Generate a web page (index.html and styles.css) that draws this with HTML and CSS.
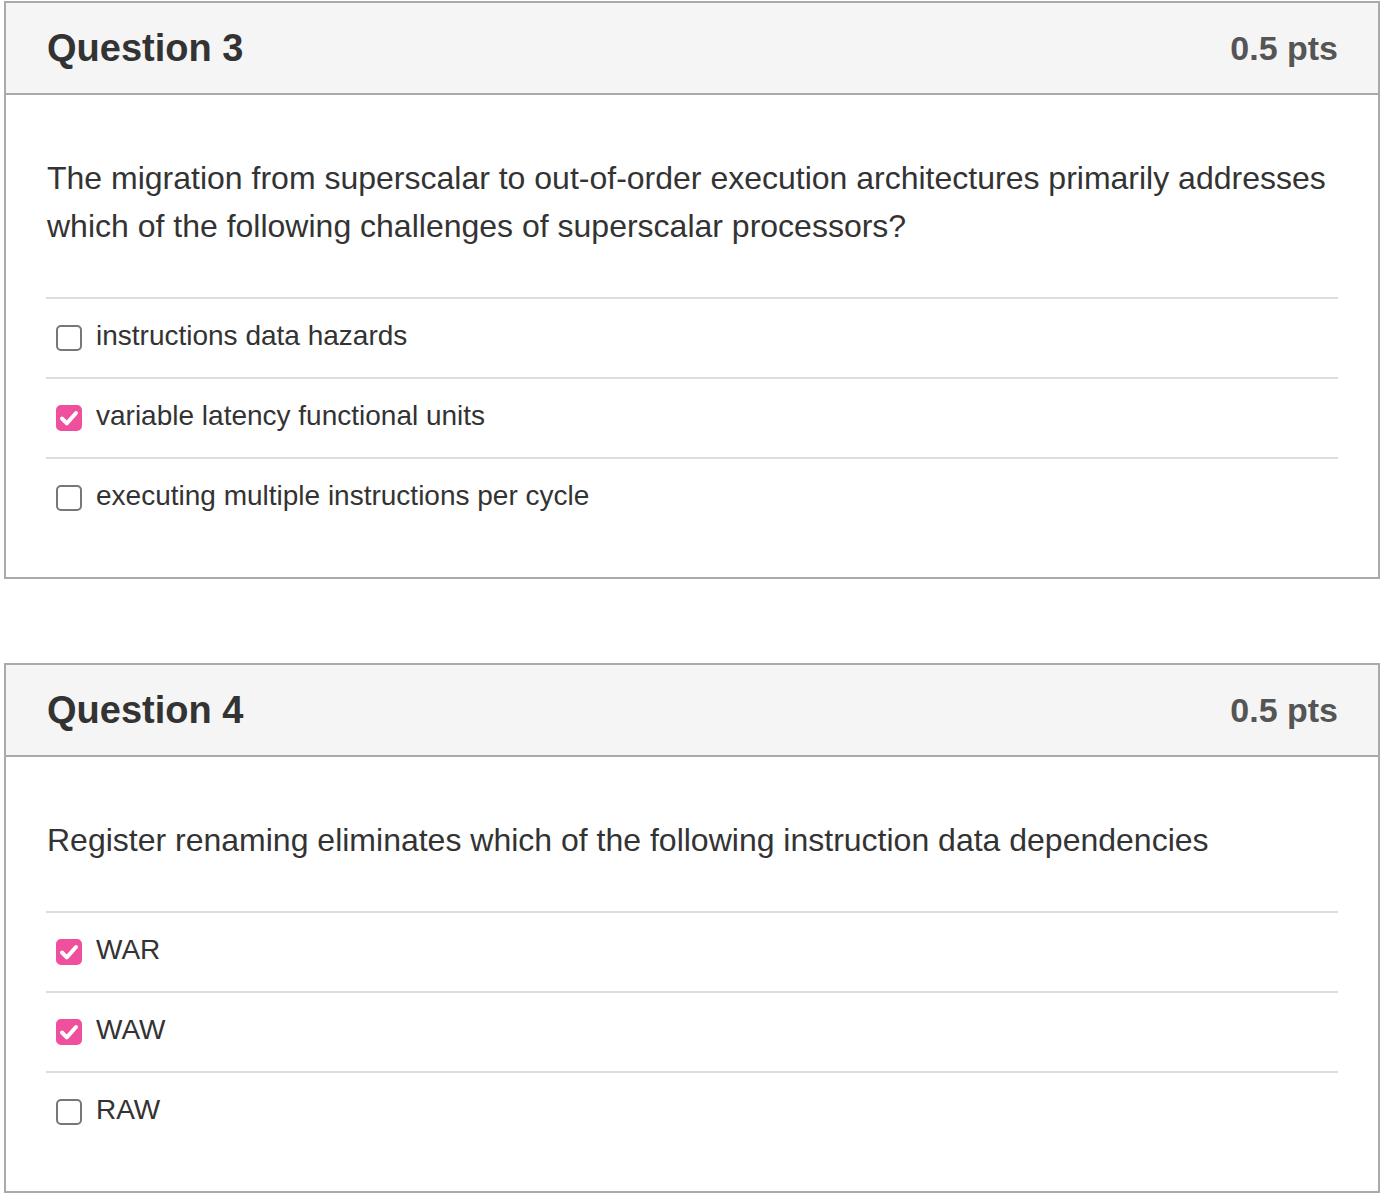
FILE: index.html
```html
<!DOCTYPE html>
<html>
<head>
<meta charset="utf-8">
<link rel="stylesheet" href="styles.css">
</head>
<body>
<div class="page">
  <section class="card">
    <header class="card-head">
      <h2 class="q-title">Question 3</h2>
      <span class="q-pts">0.5 pts</span>
    </header>
    <div class="card-body">
      <p class="q-text">The migration from superscalar to out-of-order execution architectures primarily addresses which of the following challenges of superscalar processors?</p>
      <ul class="answers">
        <li class="answer"><span class="box"></span><span class="label">instructions data hazards</span></li>
        <li class="answer"><span class="box checked"><svg viewBox="0 0 26 26" width="26" height="26"><path d="M6 13.5 L10.8 18.3 L20 8" fill="none" stroke="#fff" stroke-width="4" stroke-linecap="round" stroke-linejoin="round"/></svg></span><span class="label">variable latency functional units</span></li>
        <li class="answer"><span class="box"></span><span class="label">executing multiple instructions per cycle</span></li>
      </ul>
    </div>
  </section>
  <section class="card">
    <header class="card-head">
      <h2 class="q-title">Question 4</h2>
      <span class="q-pts">0.5 pts</span>
    </header>
    <div class="card-body">
      <p class="q-text">Register renaming eliminates which of the following instruction data dependencies</p>
      <ul class="answers">
        <li class="answer"><span class="box checked"><svg viewBox="0 0 26 26" width="26" height="26"><path d="M6 13.5 L10.8 18.3 L20 8" fill="none" stroke="#fff" stroke-width="4" stroke-linecap="round" stroke-linejoin="round"/></svg></span><span class="label">WAR</span></li>
        <li class="answer"><span class="box checked"><svg viewBox="0 0 26 26" width="26" height="26"><path d="M6 13.5 L10.8 18.3 L20 8" fill="none" stroke="#fff" stroke-width="4" stroke-linecap="round" stroke-linejoin="round"/></svg></span><span class="label">WAW</span></li>
        <li class="answer"><span class="box"></span><span class="label">RAW</span></li>
      </ul>
    </div>
  </section>
</div>
</body>
</html>
```
FILE: styles.css
```css
html, body {
  margin: 0;
  padding: 0;
  background: #fff;
}
body {
  font-family: "Liberation Sans", Arial, Helvetica, sans-serif;
  color: #333;
}
.page {
  display: flex;
  flex-direction: column;
  gap: 84px;
  padding: 1px 6px 0 4px;
}
.card {
  border: 2px solid #aaa;
}
.card-head {
  height: 90px;
  background: #f5f5f5;
  border-bottom: 2px solid #aaa;
  display: flex;
  align-items: center;
  justify-content: space-between;
  padding: 0 40px 0 41px;
}
.q-title {
  margin: 0;
  font-size: 38px;
  font-weight: bold;
  color: #333;
}
.q-pts {
  font-size: 34px;
  font-weight: bold;
  color: #555;
}
.card-body {
  padding: 59px 40px 40px 40px;
}
.q-text {
  margin: 0 0 47px 1px;
  font-size: 32px;
  line-height: 48px;
}
.answers {
  list-style: none;
  margin: 0;
  padding: 0;
}
.answer {
  height: 80px;
  border-top: 2px solid #ddd;
  box-sizing: border-box;
  display: flex;
  align-items: center;
  padding-left: 10px;
  gap: 14px;
}
.box {
  width: 26px;
  height: 26px;
  box-sizing: border-box;
  border: 2px solid #777;
  border-radius: 5px;
  display: flex;
  align-items: center;
  justify-content: center;
  flex: none;
}
.box.checked {
  background: #ef4f9c;
  border-color: #ef4f9c;
}
.box svg {
  display: block;
  flex: none;
}
.label {
  font-size: 28px;
  line-height: 32px;
  margin-top: -4px;
}
```
